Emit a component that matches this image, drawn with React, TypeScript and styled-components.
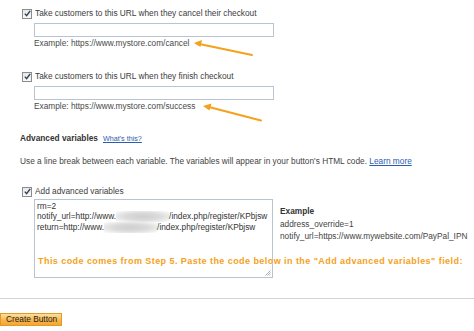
import React from "react";
import styled, { createGlobalStyle } from "styled-components";

const Global = createGlobalStyle`
  html, body { margin: 0; padding: 0; background: #fff; }
  body { font-family: "Liberation Sans", Arial, sans-serif; font-size: 8.3px; color: #3a3a3a; }
`;

const Page = styled.div`
  position: relative;
  width: 474px;
  height: 331px;
  overflow: hidden;
  padding-top: 7px;
  box-sizing: border-box;
`;

const Option = styled.div<{ $mb: number; $mt?: number }>`
  padding-left: 22px;
  margin-top: ${(p) => p.$mt ?? 0}px;
  margin-bottom: ${(p) => p.$mb}px;
`;

const CheckRow = styled.label`
  display: flex;
  align-items: center;
  gap: 3px;
  height: 13px;
  line-height: 13px;
  font-size: 8.3px;
  color: #3c3c3c;
`;

const Box = styled.span`
  width: 8px;
  height: 8px;
  border: 1px solid #8c8c8c;
  background: linear-gradient(#e8e8e8, #fafafa);
  display: inline-flex;
  align-items: center;
  justify-content: center;
  flex: none;
  svg { display: block; }
`;

const Indented = styled.div`
  padding-left: 12px;
`;

const TextInput = styled.div`
  width: 238px;
  height: 12px;
  border: 1px solid #b8c4d0;
  margin-top: 3px;
  background: #fff;
`;

const Example = styled.div`
  height: 13px;
  line-height: 13px;
  font-size: 8.3px;
  color: #4a4a4a;
`;

const Section = styled.div`
  padding-left: 20px;
`;

const Heading = styled.div`
  display: flex;
  align-items: baseline;
  gap: 5px;
  height: 13px;
  line-height: 13px;
  font-size: 8.3px;
  font-weight: bold;
  color: #333;
`;

const SmallLink = styled.a`
  font-size: 7.2px;
  font-weight: normal;
  color: #2a5db0;
  text-decoration: underline;
`;

const Info = styled.div`
  margin-top: 10px;
  height: 13px;
  line-height: 13px;
  font-size: 8.3px;
  color: #444;
  white-space: nowrap;
`;

const Link = styled.a`
  color: #2a5db0;
  text-decoration: underline;
`;

const AdvRow = styled.div`
  display: flex;
  gap: 7px;
  align-items: flex-start;
`;

const TextArea = styled.div`
  position: relative;
  width: 235px;
  height: 76px;
  border: 1px solid #b8c4d0;
  margin-top: 1px;
  padding: 1px 0 0 2px;
  font-size: 8.3px;
  line-height: 10px;
  color: #333;
  box-sizing: content-box;
`;

const CodeLine = styled.div`
  white-space: nowrap;
`;

const Blur = styled.span<{ $w: number }>`
  display: inline-block;
  width: ${(p) => p.$w}px;
  height: 11px;
  vertical-align: top;
  background: radial-gradient(ellipse at center, #cfcfcf 0%, #dadada 45%, rgba(232,232,232,0.8) 75%, rgba(255,255,255,0) 100%);
`;

const Grip = styled.svg`
  position: absolute;
  right: 1px;
  bottom: 1px;
`;

const ExampleBox = styled.div`
  margin-top: 7px;
  font-size: 8.3px;
  line-height: 12.5px;
  color: #444;
  white-space: nowrap;
`;

const ExampleTitle = styled.div`
  font-weight: bold;
  color: #333;
`;

const Note = styled.div`
  position: absolute;
  left: 38px;
  top: 256px;
  font-size: 9px;
  line-height: 10px;
  font-weight: bold;
  letter-spacing: 0.44px;
  color: #f5a11c;
  white-space: nowrap;
`;

const Rule = styled.div`
  margin-top: 20px;
  height: 1px;
  background: #d4d4d4;
`;

const Button = styled.button`
  margin-top: 14px;
  height: 13px;
  padding: 0 4px 0 5px;
  border: 1px solid #e09a2a;
  background: linear-gradient(#fde0a0, #f9b64a 55%, #f5a631);
  font-family: "Liberation Sans", Arial, sans-serif;
  font-size: 8.3px;
  line-height: 11px;
  color: #222;
  display: block;
`;

const Arrows = styled.svg`
  position: absolute;
  left: 0;
  top: 0;
  pointer-events: none;
`;

const Check = () => (
  <Box>
    <svg width="7" height="7" viewBox="0 0 7 7">
      <path d="M0.8 3.6 L2.6 5.6 L6.2 0.8" fill="none" stroke="#2d3f5a" strokeWidth="1.4" />
    </svg>
  </Box>
);

export default function App() {
  return (
    <>
      <Global />
      <Page>
        <Option $mb={20}>
          <CheckRow>
            <Check />
            Take customers to this URL when they cancel their checkout
          </CheckRow>
          <Indented>
            <TextInput />
            <Example>Example: https://www.mystore.com/cancel</Example>
          </Indented>
        </Option>
        <Option $mb={19}>
          <CheckRow>
            <Check />
            Take customers to this URL when they finish checkout
          </CheckRow>
          <Indented>
            <TextInput />
            <Example>Example: https://www.mystore.com/success</Example>
          </Indented>
        </Option>
        <Section>
          <Heading>
            Advanced variables <SmallLink>What's this?</SmallLink>
          </Heading>
          <Info>
            Use a line break between each variable. The variables will appear in your button's HTML code.{" "}
            <Link>Learn more</Link>
          </Info>
        </Section>
        <Option $mb={0} $mt={17}>
          <CheckRow>
            <Check />
            Add advanced variables
          </CheckRow>
          <Indented>
            <AdvRow>
              <TextArea>
                <CodeLine>rm=2</CodeLine>
                <CodeLine>
                  notify_url=http://www.<Blur $w={53} />/index.php/register/KPbjsw
                </CodeLine>
                <CodeLine>
                  return=http://www.<Blur $w={53} />/index.php/register/KPbjsw
                </CodeLine>
                <Grip width="6" height="6" viewBox="0 0 6 6">
                  <path d="M5.5 0.5 L0.5 5.5 M5.5 2.5 L2.5 5.5 M5.5 4.5 L4.5 5.5" stroke="#999" strokeWidth="0.8" />
                </Grip>
              </TextArea>
              <ExampleBox>
                <ExampleTitle>Example</ExampleTitle>
                <div>address_override=1</div>
                <div>notify_url=https://www.mywebsite.com/PayPal_IPN</div>
              </ExampleBox>
            </AdvRow>
          </Indented>
        </Option>
        <Rule />
        <Button>Create Button</Button>
        <Note>This code comes from Step 5. Paste the code below in the "Add advanced variables" field:</Note>
        <Arrows width="474" height="331" viewBox="0 0 474 331">
          <g stroke="#f5a11c" strokeWidth="2" fill="none" strokeLinecap="round">
            <path d="M252 55 L197 43.5" />
            <path d="M261 120.5 L207 106.5" />
          </g>
          <g fill="#f5a11c">
            <path d="M194 43 L202 40 L200.5 47 Z" />
            <path d="M203 106 L211.5 103.5 L209.5 110.5 Z" />
          </g>
        </Arrows>
      </Page>
    </>
  );
}
